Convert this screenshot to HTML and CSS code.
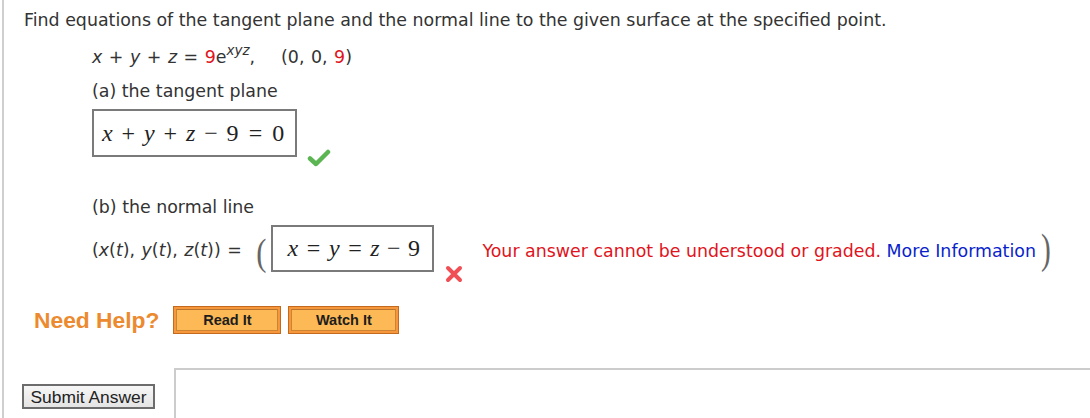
FILE: index.html
```html
<!DOCTYPE html>
<html>
<head>
<meta charset="utf-8">
<link rel="stylesheet" href="styles.css">
</head>
<body>
<div class="page">
  <div class="title">Find equations of the tangent plane and the normal line to the given surface at the specified point.</div>
  <div class="indent">
    <div class="eq"><i>x</i> + <i>y</i> + <i>z</i> = <span class="red">9</span>e<sup><i>xyz</i></sup>,<span class="pt">(0, 0, <span class="red">9</span>)</span></div>
    <div class="label a">(a) the tangent plane</div>
    <div class="answer-row">
      <div class="mbox box1"><i>x</i><span class="op">+</span><i>y</i><span class="op">+</span><i>z</i><span class="op">−</span>9<span class="rel">=</span>0</div>
      <svg class="check" width="24" height="18" viewBox="0 0 24 18"><polyline points="3,9.5 9,15 21,3" fill="none" stroke="#5ab552" stroke-width="4.5" stroke-linecap="round" stroke-linejoin="round"/></svg>
    </div>
    <div class="label b">(b) the normal line</div>
    <div class="line-row">
      <span class="lbl">(<i>x</i>(<i>t</i>), <i>y</i>(<i>t</i>), <i>z</i>(<i>t</i>)) =</span>
      <span class="paren lp">(</span>
      <div class="mbox box2"><i>x</i><span class="rel">=</span><i>y</i><span class="rel">=</span><i>z</i><span class="op">−</span>9</div>
      <svg class="cross" width="18" height="18" viewBox="0 0 18 18"><path d="M3 3 L15 15 M15 3 L3 15" fill="none" stroke="#ef4f55" stroke-width="4" stroke-linecap="round"/></svg>
      <span class="msg">Your answer cannot be understood or graded. <a class="more">More Information</a></span>
      <span class="paren rp">)</span>
    </div>
  </div>
  <div class="help">
    <span class="need">Need Help?</span>
    <span class="hbtn read"><span class="hin">Read It</span></span>
    <span class="hbtn watch"><span class="hin">Watch It</span></span>
  </div>
  <div class="submit-row">
    <button class="submit">Submit Answer</button>
    <div class="work"></div>
  </div>
</div>
</body>
</html>
```
FILE: styles.css
```css
html, body {
  margin: 0;
  padding: 0;
  background: #fff;
}
body {
  font-family: "DejaVu Sans", Verdana, sans-serif;
  color: #333;
  overflow: hidden;
}
.page {
  margin-left: 2px;
  border-left: 2px solid #cfcfcf;
  padding: 10px 0 0 20px;
  height: 418px;
  box-sizing: border-box;
  overflow: hidden;
}
.title {
  font-size: 17.4px;
  line-height: 21px;
  white-space: nowrap;
}
.indent {
  margin-left: 68px;
}
.eq {
  margin-top: 16px;
  font-size: 17.4px;
  line-height: 21px;
  white-space: nowrap;
  word-spacing: 1px;
}
.eq sup {
  font-size: 13.5px;
  line-height: 0;
  vertical-align: 8px;
}
.red { color: #e0141c; }
.pt { margin-left: 26px; }
.label {
  font-size: 17.4px;
  line-height: 21px;
}
.label.a { margin-top: 13px; }
.label.b { margin-top: 40px; }
.answer-row {
  margin-top: 7px;
  display: flex;
  align-items: flex-end;
}
.mbox {
  border: 2px solid #7a7a7a;
  font-family: "Liberation Serif", "Times New Roman", serif;
  font-size: 24px;
  color: #222;
  display: flex;
  align-items: center;
  box-sizing: border-box;
  white-space: nowrap;
}
.mbox i { font-style: italic; }
.box1 {
  width: 205px;
  height: 48px;
  padding-left: 8px;
}
.op { margin: 0 0.37em; }
.rel { margin: 0 0.42em; }
.box2 .op { margin: 0 0.31em; }
.box2 .rel { margin: 0 0.36em; }
.check {
  margin-left: 10px;
  margin-bottom: -10px;
}
.line-row {
  margin-top: 7px;
  display: flex;
  align-items: center;
  height: 47px;
  white-space: nowrap;
}
.lbl {
  font-size: 17.4px;
  line-height: 21px;
  margin-top: 4px;
  word-spacing: 1px;
}
.paren {
  font-family: "Liberation Serif", "Times New Roman", serif;
  color: #666;
  line-height: 1;
}
.lp {
  font-size: 38px;
  margin-left: 13px;
  margin-top: 6px;
  transform: scaleX(0.8);
}
.box2 {
  width: 163px;
  height: 47px;
  padding-left: 14px;
  margin-left: 4px;
}
.cross {
  align-self: flex-end;
  margin-left: 11px;
  margin-bottom: -11px;
}
.msg {
  margin-left: 19px;
  margin-top: 4px;
  font-size: 17.4px;
  color: #e0141c;
}
.more { color: #0a1fcc; }
.rp {
  font-size: 42px;
  margin-left: 3px;
  transform: scaleX(0.7);
}
.help {
  margin-top: 34px;
  margin-left: 10px;
  display: flex;
  align-items: center;
}
.need {
  font-family: "Liberation Sans", Arial, sans-serif;
  font-weight: bold;
  font-size: 22.8px;
  color: #ec8a30;
  margin-right: 14px;
}
.hbtn {
  display: inline-flex;
  box-sizing: border-box;
  height: 28px;
  border: 1px solid #c46a1f;
  background: #f5973a;
  padding: 2px;
  margin-right: 7px;
}
.read { width: 108px; }
.watch { width: 111px; }
.hin {
  flex: 1;
  display: flex;
  align-items: center;
  justify-content: center;
  background: #fcb955;
  border: 1px solid #cc8434;
  border-top-color: #b8732e;
  font-family: "Liberation Sans", Arial, sans-serif;
  font-weight: bold;
  font-size: 14.5px;
  color: #1d1d1d;
}
.submit-row {
  margin-top: 34px;
  display: flex;
  align-items: flex-start;
}
.submit {
  margin: 16px 0 0 -2px;
  height: 25px;
  width: 133px;
  padding: 0;
  border: 2px solid #6c6c6c;
  background: linear-gradient(#f6f6f6, #e4e4e4);
  font-family: "Liberation Sans", Arial, sans-serif;
  font-size: 17.4px;
  color: #222;
  line-height: 20px;
}
.work {
  margin-left: 19px;
  flex: 1;
  height: 48px;
  border-top: 2px solid #cccccc;
  border-left: 2px solid #cccccc;
}
```
